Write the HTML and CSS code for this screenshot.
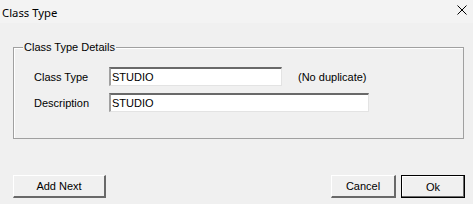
FILE: index.html
```html
<!DOCTYPE html>
<html>
<head>
<meta charset="utf-8">
<link rel="stylesheet" href="styles.css">
</head>
<body>
<div class="window">
  <div class="titlebar">
    <span class="title">Class Type</span>
    <svg class="close" width="10" height="10" viewBox="0 0 10 10"><path d="M0.5 0.5 L9.5 9.5 M9.5 0.5 L0.5 9.5" stroke="#000" stroke-width="1" fill="none"/></svg>
  </div>
  <div class="client">
    <div class="group">
      <span class="legend">Class Type Details</span>
      <div class="row">
        <span class="label">Class Type</span>
        <div class="input short">STUDIO</div>
        <span class="hint">(No duplicate)</span>
      </div>
      <div class="row">
        <span class="label">Description</span>
        <div class="input long">STUDIO</div>
      </div>
    </div>
    <div class="buttons">
      <div class="btn addnext">Add Next</div>
      <div class="spacer"></div>
      <div class="btn cancel">Cancel</div>
      <div class="btn ok">Ok</div>
    </div>
  </div>
</div>
</body>
</html>
```
FILE: styles.css
```css
html, body { margin: 0; padding: 0; }
body {
  width: 473px;
  height: 204px;
  background: #f0f0f0;
  font-family: "Liberation Sans", Arial, sans-serif;
  font-size: 11px;
  color: #000;
  overflow: hidden;
}
.window { width: 473px; height: 204px; display: flex; flex-direction: column; }
.titlebar {
  height: 23px;
  background: #f3f3f3;
  display: flex;
  align-items: center;
  justify-content: space-between;
  padding: 0 6px 0 2px;
  box-sizing: border-box;
}
.title {
  font-family: "Noto Sans", "Open Sans", sans-serif;
  font-size: 11.3px;
  color: #000;
  margin-top: 1px;
}
.close { display: block; margin-top: -3px; }
.client { padding: 24px 8px 0 13px; }
.group {
  position: relative;
  width: 451px;
  height: 92px;
  border: 1px solid #a0a0a0;
  box-shadow: inset 1px 1px 0 #fff;
  box-sizing: border-box;
  padding: 19px 0 0 20px;
  display: flex;
  flex-direction: column;
  gap: 7px;
}
.legend {
  position: absolute;
  left: 9px;
  top: -7px;
  padding: 0 1px;
  background: #f0f0f0;
  line-height: 13px;
}
.row { display: flex; align-items: center; height: 19px; }
.label { width: 75px; }
.input {
  height: 19px;
  box-sizing: border-box;
  background: #fff;
  border-top: 2px solid #696969;
  border-left: 2px solid #a0a0a0;
  border-right: 1px solid #e3e3e3;
  border-bottom: 1px solid #e3e3e3;
  padding-left: 1px;
  line-height: 16px;
}
.short { width: 173px; }
.long { width: 260px; }
.hint { margin-left: 16px; }
.buttons { display: flex; margin-top: 36px; gap: 5px; }
.spacer { flex: 1; }
.btn {
  height: 23px;
  box-sizing: border-box;
  background: #f0f0f0;
  border-top: 1px solid #fff;
  border-left: 1px solid #fff;
  border-right: 2px solid #696969;
  border-bottom: 2px solid #696969;
  display: flex;
  align-items: center;
  justify-content: center;
}
.addnext { width: 93px; }
.cancel { width: 65px; }
.ok { width: 64px; border: 1px solid #000; box-shadow: inset -1px -1px 0 #696969, inset 1px 1px 0 #fff; }
```
